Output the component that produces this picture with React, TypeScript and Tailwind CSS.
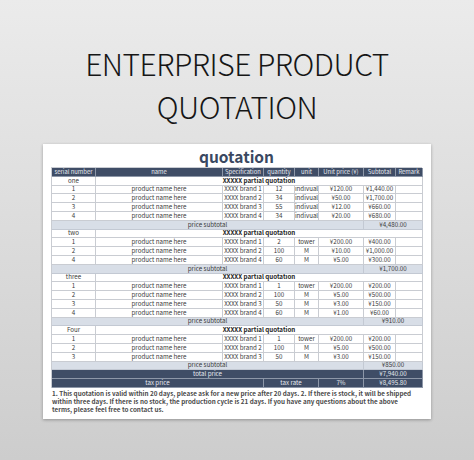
import React from 'react'

type Item = [string, string, string, string, string, string]
type Group = { label: string; items: Item[]; subtotal: string }

const GROUPS: Group[] = [
  {
    label: 'one',
    items: [
      ['1', 'XXXX brand 1', '12', 'indivual', '¥120.00', '¥1,440.00'],
      ['2', 'XXXX brand 2', '34', 'indivual', '¥50.00', '¥1,700.00'],
      ['3', 'XXXX brand 3', '55', 'indivual', '¥12.00', '¥660.00'],
      ['4', 'XXXX brand 4', '34', 'indivual', '¥20.00', '¥680.00'],
    ],
    subtotal: '¥4,480.00',
  },
  {
    label: 'two',
    items: [
      ['1', 'XXXX brand 1', '2', 'tower', '¥200.00', '¥400.00'],
      ['2', 'XXXX brand 2', '100', 'M', '¥10.00', '¥1,000.00'],
      ['4', 'XXXX brand 4', '60', 'M', '¥5.00', '¥300.00'],
    ],
    subtotal: '¥1,700.00',
  },
  {
    label: 'three',
    items: [
      ['1', 'XXXX brand 1', '1', 'tower', '¥200.00', '¥200.00'],
      ['2', 'XXXX brand 2', '100', 'M', '¥5.00', '¥500.00'],
      ['3', 'XXXX brand 3', '50', 'M', '¥3.00', '¥150.00'],
      ['4', 'XXXX brand 4', '60', 'M', '¥1.00', '¥60.00'],
    ],
    subtotal: '¥910.00',
  },
  {
    label: 'Four',
    items: [
      ['1', 'XXXX brand 1', '1', 'tower', '¥200.00', '¥200.00'],
      ['2', 'XXXX brand 2', '100', 'M', '¥5.00', '¥500.00'],
      ['3', 'XXXX brand 3', '50', 'M', '¥3.00', '¥150.00'],
    ],
    subtotal: '¥850.00',
  },
]

const HEAD = ['serial number', 'name', 'Specification', 'quantity', 'unit', 'Unit price (¥)', 'Subtotal', 'Remark']

// base cell: borders right/bottom, text centered
const cell = 'flex items-center justify-center whitespace-nowrap overflow-hidden leading-none border-r border-b'
const light = 'border-[#c9ccd2] text-[#3a3a3a]'
const dark = 'bg-[#3f4d66] border-[#8d97a8] text-[#e6e9ef]'
const band = 'bg-[#d8dee7] border-[#c3c9d3] text-[#3a3a3a]'

export default function App() {
  return (
    <div className="w-[474px] h-[460px] overflow-hidden bg-linear-to-b from-[#ebebeb] to-[#cdcdcd] font-['Noto_Sans_CJK_SC','Noto_Sans',sans-serif]">
      {/* Heading */}
      <div className="pt-[42px] text-center text-[30px] leading-[43px] tracking-[-0.5px] text-[#161616] font-light">
        <div>ENTERPRISE PRODUCT</div>
        <div>QUOTATION</div>
      </div>

      {/* Sheet */}
      <div className="ml-[43px] mt-[16px] w-[388px] h-[275px] bg-white shadow-[0_1px_3px_rgba(0,0,0,0.3)] pl-[8px] pr-[9px]">
        <div className="h-[23px] flex items-end justify-center">
          <span className="text-[15.5px] leading-none font-bold text-[#3a4861] pb-[3px]">quotation</span>
        </div>

        <div className="grid grid-cols-[44px_127px_41px_31px_24px_45px_32px_27px] auto-rows-[8.8px] text-[6.2px] border-l border-t border-[#c9ccd2]">
          {HEAD.map(h => (
            <div key={h} className={`${cell} ${dark} text-[5.9px]`}>{h}</div>
          ))}

          {GROUPS.map(g => (
            <React.Fragment key={g.label}>
              <div className={`${cell} ${light}`}>{g.label}</div>
              <div className={`${cell} ${light} col-span-7 font-bold text-[#222]`}>XXXXX partial quotation</div>

              {g.items.map(it => (
                <React.Fragment key={g.label + it[0]}>
                  <div className={`${cell} ${light}`}>{it[0]}</div>
                  <div className={`${cell} ${light}`}>product name here</div>
                  <div className={`${cell} ${light}`}>{it[1]}</div>
                  <div className={`${cell} ${light}`}>{it[2]}</div>
                  <div className={`${cell} ${light}`}>{it[3]}</div>
                  <div className={`${cell} ${light}`}>{it[4]}</div>
                  <div className={`${cell} ${light}`}>{it[5]}</div>
                  <div className={`${cell} ${light}`}></div>
                </React.Fragment>
              ))}

              <div className={`${cell} ${band} col-span-6`}>price subtotal</div>
              <div className={`${cell} ${band} col-span-2`}>{g.subtotal}</div>
            </React.Fragment>
          ))}

          <div className={`${cell} ${dark} col-span-6`}>total price</div>
          <div className={`${cell} ${dark} col-span-2`}>¥7,940.00</div>

          <div className={`${cell} ${dark} col-span-3`}>tax price</div>
          <div className={`${cell} ${dark} col-span-2`}>tax rate</div>
          <div className={`${cell} ${dark}`}>7%</div>
          <div className={`${cell} ${dark} col-span-2`}>¥8,495.80</div>
        </div>

        <p className="mt-[2px] pl-[1px] text-[6.3px] leading-[8px] font-semibold text-[#4a4a4a] whitespace-nowrap">
          1. This quotation is valid within 20 days, please ask for a new price after 20 days. 2. If there is stock, it will be shipped
          <br />
          within three days. If there is no stock, the production cycle is 21 days. If you have any questions about the above
          <br />
          terms, please feel free to contact us.
        </p>
      </div>
    </div>
  )
}
